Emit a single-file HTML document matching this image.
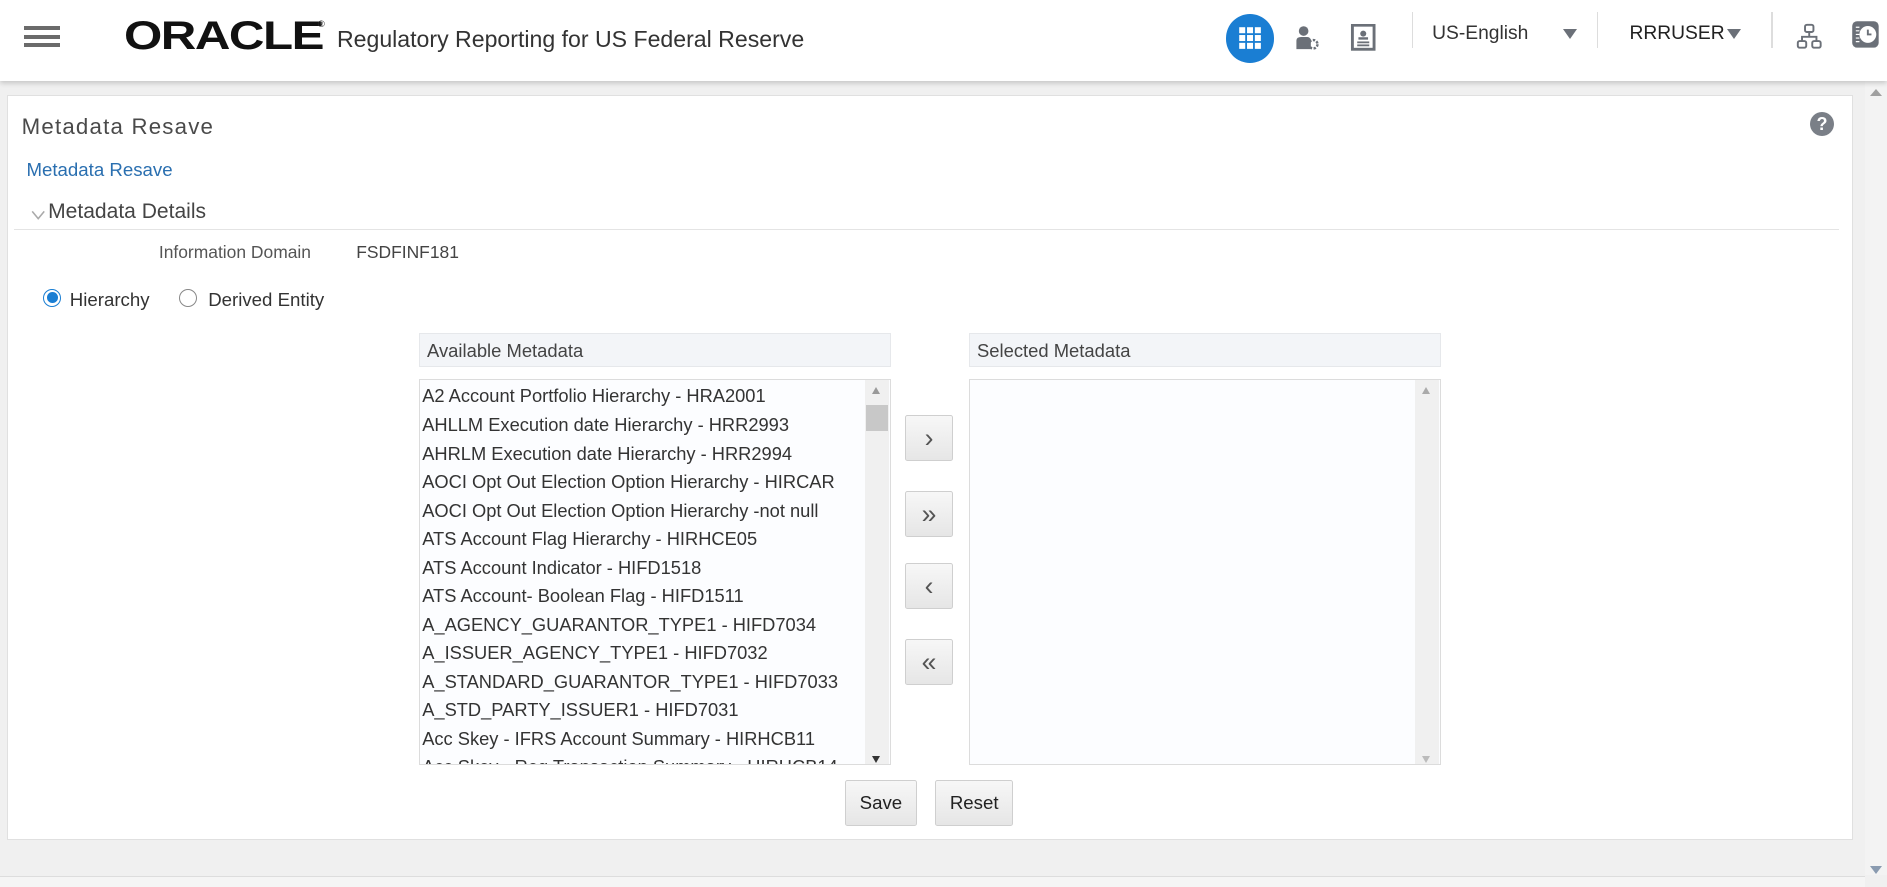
<!DOCTYPE html>
<html><head><meta charset="utf-8">
<style>
html,body{margin:0;padding:0;}
body{width:1568px;height:736px;overflow:hidden;zoom:1.20344;background:#f0f0f0;font-family:"Liberation Sans",sans-serif;position:relative;color:#333;}
.a{position:absolute;}
#hdr{left:0;top:0;width:1568px;height:67px;background:#fff;box-shadow:0 2px 4px rgba(0,0,0,.18);z-index:2;}
.ham{left:20px;width:30px;height:3px;background:#6b6b6b;}
.sep{top:10px;width:1px;height:30px;background:#ddd;}
.tri{width:0;height:0;border-left:6px solid transparent;border-right:6px solid transparent;border-top:9px solid #6b7078;}
#panel{left:6px;top:79px;width:1532px;height:617px;background:#fff;border:1px solid #e0e0e0;}
.hd{background:#f3f5f8;border:1px solid #e6e8eb;height:28px;font-size:15.3px;color:#444;line-height:28px;padding-left:6px;box-sizing:border-box;}
.box{border:1px solid #dcdcdc;background:#fcfdff;box-sizing:border-box;overflow:hidden;}
.it{font-size:15.2px;color:#333;height:23.7px;line-height:23.7px;white-space:nowrap;}
.btn{width:40px;height:38px;background:linear-gradient(#f7f7f7,#e6e6e6);border:1px solid #cfcfcf;border-radius:2px;box-sizing:border-box;font-size:22px;color:#555;text-align:center;line-height:38px;}
.sb{background:#f0f0f0;}
</style></head><body>
<div id="hdr" class="a">
  <div class="a ham" style="top:22px"></div>
  <div class="a ham" style="top:29px"></div>
  <div class="a ham" style="top:36px"></div>
  <div class="a" style="left:103px;top:12px;font-size:33px;font-weight:bold;color:#111;letter-spacing:-1px;transform:scaleX(1.24);transform-origin:left;">ORACLE</div>
  <div class="a" style="left:264px;top:16px;font-size:8px;">®</div>
  <div class="a" style="left:280px;top:22px;font-size:19.2px;color:#333;">Regulatory Reporting for US Federal Reserve</div>
  <div class="a" style="left:1019px;top:12px;width:40px;height:40px;border-radius:50%;background:#1a7ed3;"></div>
  <svg class="a" style="left:1029px;top:22px" width="20" height="20" viewBox="0 0 20 20" fill="#fff"><rect x="1" y="1" width="5" height="5"/><rect x="7.5" y="1" width="5" height="5"/><rect x="14" y="1" width="5" height="5"/><rect x="1" y="7.5" width="5" height="5"/><rect x="7.5" y="7.5" width="5" height="5"/><rect x="14" y="7.5" width="5" height="5"/><rect x="1" y="14" width="5" height="5"/><rect x="7.5" y="14" width="5" height="5"/><rect x="14" y="14" width="5" height="5"/></svg>
  <svg class="a" style="left:1075px;top:21px" width="22" height="22" viewBox="0 0 22 22"><circle cx="8" cy="5" r="4" fill="#6b7078"/><path d="M2 20V13q0-3 4-3h5q2 0 3 2v8z" fill="#6b7078"/><circle cx="16" cy="16" r="3.5" fill="none" stroke="#6b7078" stroke-width="2" stroke-dasharray="2 1.2"/></svg>
  <svg class="a" style="left:1122px;top:20px" width="22" height="22" viewBox="0 0 22 22"><rect x="2" y="1" width="18" height="20" fill="none" stroke="#6b7078" stroke-width="2.4"/><circle cx="11" cy="8" r="2.5" fill="#6b7078"/><rect x="7" y="11" width="8" height="2" fill="#6b7078"/><rect x="6" y="14.5" width="10" height="1.5" fill="#6b7078"/><rect x="6" y="17" width="10" height="1.5" fill="#6b7078"/></svg>
  <div class="a sep" style="left:1173px"></div>
  <div class="a" style="left:1190px;top:19px;font-size:16px;color:#333;">US-English</div>
  <div class="a tri" style="left:1299px;top:24px"></div>
  <div class="a sep" style="left:1327px"></div>
  <div class="a" style="left:1354px;top:19px;font-size:16px;color:#222;">RRRUSER</div>
  <div class="a tri" style="left:1435px;top:24px"></div>
  <div class="a sep" style="left:1472px"></div>
  <svg class="a" style="left:1492px;top:19px" width="22" height="22" viewBox="0 0 22 22" fill="none" stroke="#6b7078" stroke-width="1.6"><rect x="7.5" y="1.5" width="7" height="6" rx="1.5"/><path d="M11 7.5v4M5 15v-3.5h12V15"/><rect x="1.5" y="15" width="7" height="5.5" rx="1.5"/><rect x="13.5" y="15" width="7" height="5.5" rx="1.5"/></svg>
  <svg class="a" style="left:1538px;top:17px" width="24" height="24" viewBox="0 0 24 24"><rect x="1" y="1" width="22" height="22" rx="4" fill="#6b7078"/><circle cx="14" cy="12" r="7" fill="#fff"/><path d="M14 8v4h3" stroke="#6b7078" stroke-width="1.6" fill="none"/><path d="M4 6h3M4 9h3M4 12h3M4 15h3M4 18h3" stroke="#fff" stroke-width="1"/></svg>
</div>
<div class="a" style="left:1550px;top:67px;width:18px;height:660px;background:#f3f3f3;"></div>
<div class="a" style="left:1554px;top:74px;width:0;height:0;border-left:5px solid transparent;border-right:5px solid transparent;border-bottom:6px solid #a0a0a0;"></div>
<div class="a" style="left:1554px;top:720px;width:0;height:0;border-left:5px solid transparent;border-right:5px solid transparent;border-top:7px solid #8a9bb0;"></div>
<div class="a" style="left:0;top:728px;width:1550px;height:8px;background:#f5f5f5;border-top:1px solid #ddd;"></div>
<div id="panel" class="a"></div>
<div class="a" style="left:18px;top:95px;font-size:18.5px;color:#4a4a4a;letter-spacing:1px;">Metadata Resave</div>
<div class="a" style="left:1504px;top:93px;width:20px;height:20px;border-radius:50%;background:#7a7f87;color:#fff;font-weight:bold;font-size:15px;text-align:center;line-height:20px;">?</div>
<div class="a" style="left:22px;top:132px;font-size:15.5px;color:#2a6fb0;">Metadata Resave</div>
<svg class="a" style="left:26px;top:174px" width="12" height="10" viewBox="0 0 12 10"><path d="M1 2l5 6 5-6" fill="none" stroke="#aaa" stroke-width="1.3"/></svg>
<div class="a" style="left:40px;top:166px;font-size:17.5px;color:#444;">Metadata Details</div>
<div class="a" style="left:12px;top:190px;width:1516px;height:1px;background:#e4e4e4;"></div>
<div class="a" style="left:132px;top:201px;font-size:14.5px;color:#555;">Information Domain</div>
<div class="a" style="left:296px;top:201px;font-size:14.5px;color:#444;">FSDFINF181</div>
<div class="a" style="left:36px;top:240px;width:15px;height:15px;border-radius:50%;border:1px solid #1a7ed3;box-sizing:border-box;"><div style="margin:2px;width:9px;height:9px;border-radius:50%;background:#1a7ed3;"></div></div>
<div class="a" style="left:58px;top:240px;font-size:15.5px;color:#333;">Hierarchy</div>
<div class="a" style="left:149px;top:240px;width:15px;height:15px;border-radius:50%;border:1px solid #888;box-sizing:border-box;"></div>
<div class="a" style="left:173px;top:240px;font-size:15.5px;color:#333;">Derived Entity</div>
<div class="a hd" style="left:348px;top:277px;width:392px;">Available Metadata</div>
<div class="a hd" style="left:805px;top:277px;width:392px;">Selected Metadata</div>
<div class="a box" style="left:348px;top:315px;width:392px;height:321px;">
  <div class="a sb" style="left:370px;top:0;width:20px;height:321px;"></div>
  <div class="a" style="left:376px;top:6px;border-left:4px solid transparent;border-right:4px solid transparent;border-bottom:6px solid #999;"></div>
  <div class="a" style="left:371px;top:21px;width:18px;height:21px;background:#c8c8c8;"></div>
  <div class="a" style="left:376px;top:312px;border-left:4px solid transparent;border-right:4px solid transparent;border-top:6px solid #333;"></div>
  <div class="a" style="left:2px;top:2px;width:368px;overflow:hidden;">
  <div class="it">A2 Account Portfolio Hierarchy - HRA2001</div>
  <div class="it">AHLLM Execution date Hierarchy - HRR2993</div>
  <div class="it">AHRLM Execution date Hierarchy - HRR2994</div>
  <div class="it">AOCI Opt Out Election Option Hierarchy - HIRCAR</div>
  <div class="it">AOCI Opt Out Election Option Hierarchy -not null</div>
  <div class="it">ATS Account Flag Hierarchy - HIRHCE05</div>
  <div class="it">ATS Account Indicator - HIFD1518</div>
  <div class="it">ATS Account- Boolean Flag - HIFD1511</div>
  <div class="it">A_AGENCY_GUARANTOR_TYPE1 - HIFD7034</div>
  <div class="it">A_ISSUER_AGENCY_TYPE1 - HIFD7032</div>
  <div class="it">A_STANDARD_GUARANTOR_TYPE1 - HIFD7033</div>
  <div class="it">A_STD_PARTY_ISSUER1 - HIFD7031</div>
  <div class="it">Acc Skey - IFRS Account Summary - HIRHCB11</div>
  <div class="it">Acc Skey - Reg Transaction Summary - HIRHCB14</div>
  </div>
</div>
<div class="a box" style="left:805px;top:315px;width:392px;height:321px;">
  <div class="a sb" style="left:370px;top:0;width:20px;height:321px;"></div>
  <div class="a" style="left:376px;top:6px;border-left:4px solid transparent;border-right:4px solid transparent;border-bottom:6px solid #aaa;"></div>
  <div class="a" style="left:376px;top:312px;border-left:4px solid transparent;border-right:4px solid transparent;border-top:6px solid #bbb;"></div>
</div>
<div class="a btn" style="left:752px;top:345px;">&#8250;</div>
<div class="a btn" style="left:752px;top:408px;">&#187;</div>
<div class="a btn" style="left:752px;top:468px;">&#8249;</div>
<div class="a btn" style="left:752px;top:531px;">&#171;</div>
<div class="a btn" style="left:702px;top:648px;width:60px;font-size:15.5px;color:#222;line-height:36px;">Save</div>
<div class="a btn" style="left:777px;top:648px;width:65px;font-size:15.5px;color:#222;line-height:36px;">Reset</div>
</body></html>
